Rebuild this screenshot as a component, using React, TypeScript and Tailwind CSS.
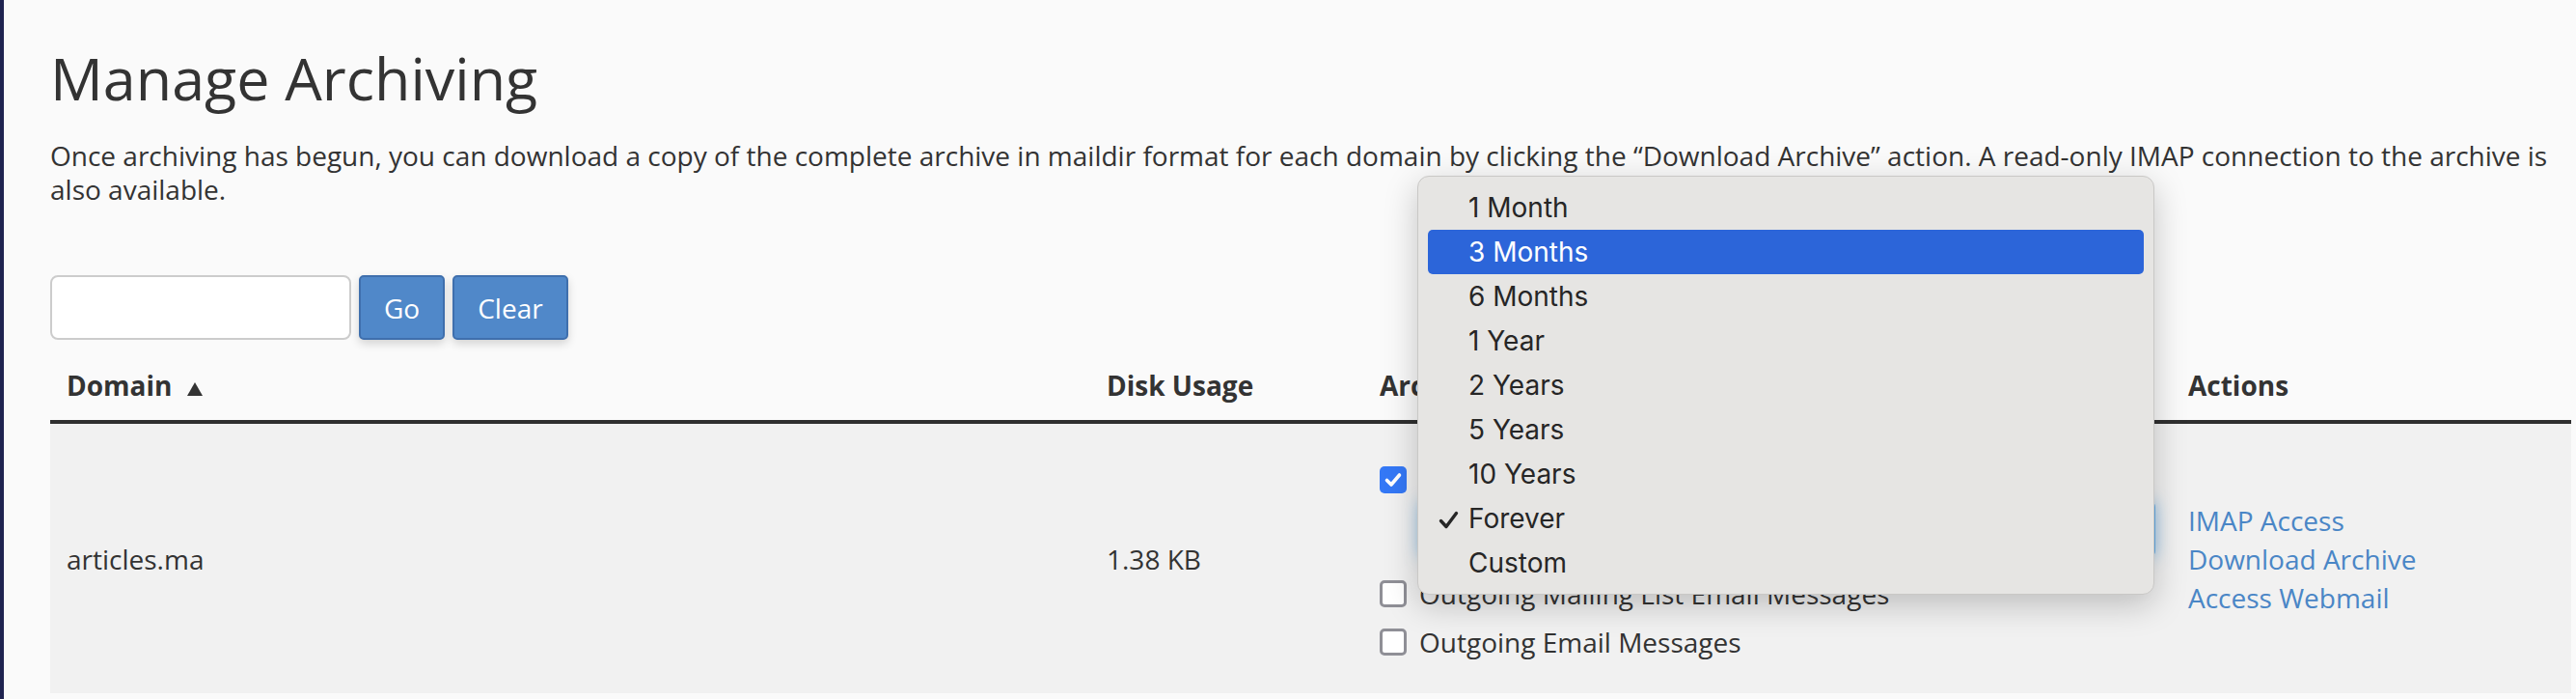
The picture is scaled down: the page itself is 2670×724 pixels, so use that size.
import React from 'react';

const periods = ['1 Month', '3 Months', '6 Months', '1 Year', '2 Years', '5 Years', '10 Years', 'Forever', 'Custom'];

function Checkbox({ checked }: { checked?: boolean }) {
  if (checked) {
    return (
      <span className="flex h-[28px] w-[28px] shrink-0 items-center justify-center rounded-[5px] bg-[#3478f6]">
        <svg width="28" height="28" viewBox="0 0 28 28" fill="none">
          <path d="M7.5 14.5 L12 19 L20.5 9" stroke="white" strokeWidth="3.6" strokeLinecap="round" strokeLinejoin="round" />
        </svg>
      </span>
    );
  }
  return <span className="h-[28px] w-[28px] shrink-0 rounded-[5px] border-[3px] border-[#8f8f96] bg-white" />;
}

function PeriodMenu() {
  return (
    <div className="absolute left-[1465px] top-[182px] h-[434px] w-[764px] rounded-[12px] border border-[#c9c8c6] bg-[#e6e5e3] px-[10px] py-[9px] font-['Inter',sans-serif] text-[28px] text-[#262626] shadow-[0_10px_34px_rgba(0,0,0,0.22)]">
      {periods.map((p) => {
        const active = p === '3 Months';
        return (
          <div
            key={p}
            className={
              active
                ? 'relative flex h-[46px] items-center rounded-[5px] bg-[#2c65d9] pl-[42px] leading-[46px] text-white'
                : 'relative flex h-[46px] items-center pl-[42px] leading-[46px]'
            }
          >
            {p === 'Forever' && (
              <svg className="absolute left-[11px] top-[15px]" width="21" height="19" viewBox="0 0 21 19" fill="none">
                <path d="M2.5 10.5 L8 16.5 L18.5 2.5" stroke="#262626" strokeWidth="3.4" strokeLinecap="round" strokeLinejoin="round" />
              </svg>
            )}
            {p}
          </div>
        );
      })}
    </div>
  );
}

export default function App() {
  return (
    <div className="flex min-h-screen bg-[#fafafa] font-['Open_Sans',sans-serif] text-[#333]">
      <div className="w-[4px] shrink-0 bg-[#1f2350]" />
      <div className="relative flex-1 pl-[48px] pt-[48px]">
        <h1 className="text-[61px] font-normal leading-[66px]">Manage Archiving</h1>
        <p className="mt-[30px] w-[2613px] text-[28px] leading-[35px]">
          Once archiving has begun, you can download a copy of the complete archive in maildir format for each domain by
          clicking the “Download Archive” action. A read-only IMAP connection to the archive is also available.
        </p>

        <div className="mt-[71px] flex gap-[8px]">
          <input
            type="text"
            className="h-[67px] w-[312px] rounded-[8px] border-2 border-[#cccccc] bg-white px-[16px] text-[28px] outline-none"
          />
          <button className="h-[67px] rounded-[5px] border-2 border-[#3f6fad] bg-[#5088c9] px-[24px] text-[28px] text-white shadow-[0_4px_10px_rgba(0,0,0,0.16)]">
            Go
          </button>
          <button className="h-[67px] rounded-[5px] border-2 border-[#3f6fad] bg-[#5088c9] px-[24px] text-[28px] text-white shadow-[0_4px_10px_rgba(0,0,0,0.16)]">
            Clear
          </button>
        </div>

        <div className="w-[2613px] text-[28px] leading-[40px]">
          <div className="flex border-b-4 border-[#2f2f2f] pb-[16px] pt-[27px] font-bold">
            <div className="flex w-[1078px] items-baseline pl-[17px]">
              Domain
              <svg className="ml-[16px]" width="16" height="14" viewBox="0 0 16 14">
                <path d="M8 0 L16 14 L0 14 Z" fill="#333" />
              </svg>
            </div>
            <div className="w-[283px] pl-[17px]">Disk Usage</div>
            <div className="w-[838px] pl-[17px]">Archive Configuration</div>
            <div className="w-[414px] pl-[17px]">Actions</div>
          </div>

          <div className="flex h-[279px] bg-[#f1f1f1]">
            <div className="flex w-[1078px] items-center pl-[17px]">articles.ma</div>
            <div className="flex w-[283px] items-center pl-[17px]">1.38 KB</div>
            <div className="w-[838px] pl-[17px] pt-[38px]">
              <label className="flex h-[40px] items-center gap-[13px]">
                <Checkbox checked />
                Incoming Email Messages
              </label>
              <div className="ml-[41px] mt-[2px] h-[58px] w-[763px] rounded-[6px] border-2 border-[#66afe9] bg-white shadow-[0_0_16px_rgba(102,175,233,0.7)]" />
              <label className="mt-[18px] flex h-[40px] items-center gap-[13px]">
                <Checkbox />
                Outgoing Mailing List Email Messages
              </label>
              <label className="mt-[10px] flex h-[40px] items-center gap-[13px]">
                <Checkbox />
                Outgoing Email Messages
              </label>
            </div>
            <div className="flex w-[414px] flex-col justify-center pl-[17px] text-[#4a86c6]">
              <a href="#">IMAP Access</a>
              <a href="#">Download Archive</a>
              <a href="#">Access Webmail</a>
            </div>
          </div>
        </div>

        <PeriodMenu />
      </div>
    </div>
  );
}
